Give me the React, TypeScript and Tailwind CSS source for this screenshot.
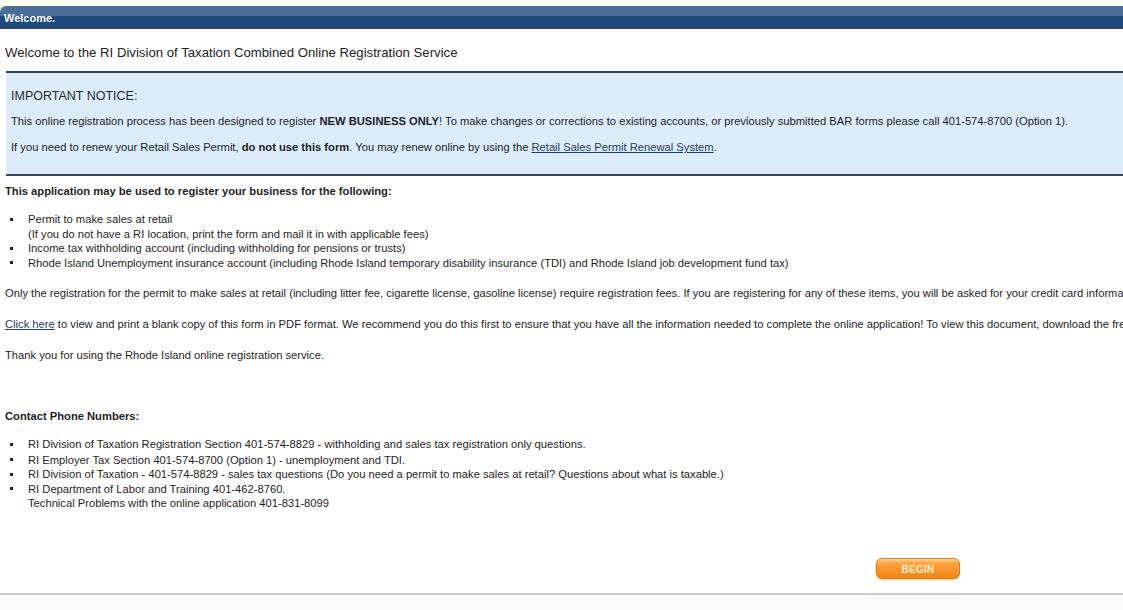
export default function App() {
  const bullet = (
    <span className="flex h-[14.5px] w-[18px] shrink-0 items-center">
      <span className="h-[3px] w-[3px] bg-[#222]" />
    </span>
  );

  return (
    <div className="h-[610px] w-[1123px] overflow-hidden bg-white font-['Liberation_Sans',Arial,sans-serif] text-[11.2px] text-[#1e1e1e]">
      {/* Top bar */}
      <div className="h-[6px] bg-[#fffff4]" />
      <div className="flex h-[23px] items-center rounded-tl-[6px] bg-[linear-gradient(to_bottom,#4b6f9a_0%,#4b6f9a_43%,#1e4a7f_43%,#1e4a7f_90%,#284868_90%)] pl-[4px] pt-[2px]">
        <span className="text-[11px] font-bold text-white">Welcome.</span>
      </div>

      <div className="mt-[16px] pl-[5px] text-[13.2px] leading-[15px] text-[#222]">
        Welcome to the RI Division of Taxation Combined Online Registration Service
      </div>

      {/* Notice */}
      <div className="ml-[6px] mt-[11px] whitespace-nowrap border-y-2 border-[#2e4660] bg-[#dcecfb] pb-[19px] pl-[5px] pt-[16px]">
        <div className="text-[12.5px] leading-[15px] text-[#2a2a2a]">IMPORTANT NOTICE:</div>
        <p className="mt-[10px] leading-[15px]">
          This online registration process has been designed to register <b>NEW BUSINESS ONLY</b>! To make changes
          or corrections to existing accounts, or previously submitted BAR forms please call 401-574-8700 (Option 1).
        </p>
        <p className="mt-[11px] leading-[15px]">
          If you need to renew your Retail Sales Permit, <b>do not use this form</b>. You may renew online by using
          the{" "}
          <a href="#" className="text-[#1d3e66] underline">
            Retail Sales Permit Renewal System
          </a>
          .
        </p>
      </div>

      <div className="whitespace-nowrap pl-[5px]">
        <p className="mt-[8px] font-bold leading-[15px]">
          This application may be used to register your business for the following:
        </p>

        <ul className="mt-[13px] pl-[5px] leading-[14.5px]">
          <li className="flex">
            {bullet}
            <span>
              Permit to make sales at retail
              <br />
              (If you do not have a RI location, print the form and mail it in with applicable fees)
            </span>
          </li>
          <li className="flex">
            {bullet}
            <span>Income tax withholding account (including withholding for pensions or trusts)</span>
          </li>
          <li className="flex">
            {bullet}
            <span>
              Rhode Island Unemployment insurance account (including Rhode Island temporary disability insurance
              (TDI) and Rhode Island job development fund tax)
            </span>
          </li>
        </ul>

        <p className="mt-[16px] leading-[15px]">
          Only the registration for the permit to make sales at retail (including litter fee, cigarette license,
          gasoline license) require registration fees. If you are registering for any of these items, you will be
          asked for your credit card information.
        </p>
        <p className="mt-[16px] leading-[15px]">
          <a href="#" className="text-[#1d3e66] underline">
            Click here
          </a>{" "}
          to view and print a blank copy of this form in PDF format. We recommend you do this first to ensure that you
          have all the information needed to complete the online application! To view this document, download the
          free Adobe Reader.
        </p>
        <p className="mt-[16px] leading-[15px]">Thank you for using the Rhode Island online registration service.</p>

        <p className="mt-[46px] font-bold leading-[15px]">Contact Phone Numbers:</p>
        <ul className="mt-[13px] pl-[5px] leading-[14.5px]">
          <li className="mb-[1px] flex">
            {bullet}
            <span>RI Division of Taxation Registration Section 401-574-8829 - withholding and sales tax registration only questions.</span>
          </li>
          <li className="flex">
            {bullet}
            <span>RI Employer Tax Section 401-574-8700 (Option 1) - unemployment and TDI.</span>
          </li>
          <li className="flex">
            {bullet}
            <span>
              RI Division of Taxation - 401-574-8829 - sales tax questions (Do you need a permit to make sales at
              retail? Questions about what is taxable.)
            </span>
          </li>
          <li className="flex">
            {bullet}
            <span>
              RI Department of Labor and Training 401-462-8760.
              <br />
              Technical Problems with the online application 401-831-8099
            </span>
          </li>
        </ul>
      </div>

      {/* Begin */}
      <div className="mt-[47px] flex justify-end pr-[163px]">
        <button className="flex h-[21px] w-[84px] items-center justify-center rounded-[6px] border border-[#e07d12] bg-[linear-gradient(to_bottom,#ffd9a8_0%,#ffa94a_18%,#f8952c_55%,#ef8418_100%)] pt-[2px] text-[10px] font-bold tracking-[0.3px] text-[#ffeccf] shadow-[0_1px_2px_rgba(200,110,20,0.4)]">
          BEGIN
        </button>
      </div>

      <div className="mt-[14px] h-[2px] bg-[#c9c9c9]" />
      <div className="h-[20px] bg-[#fbfbfb]" />
    </div>
  );
}
